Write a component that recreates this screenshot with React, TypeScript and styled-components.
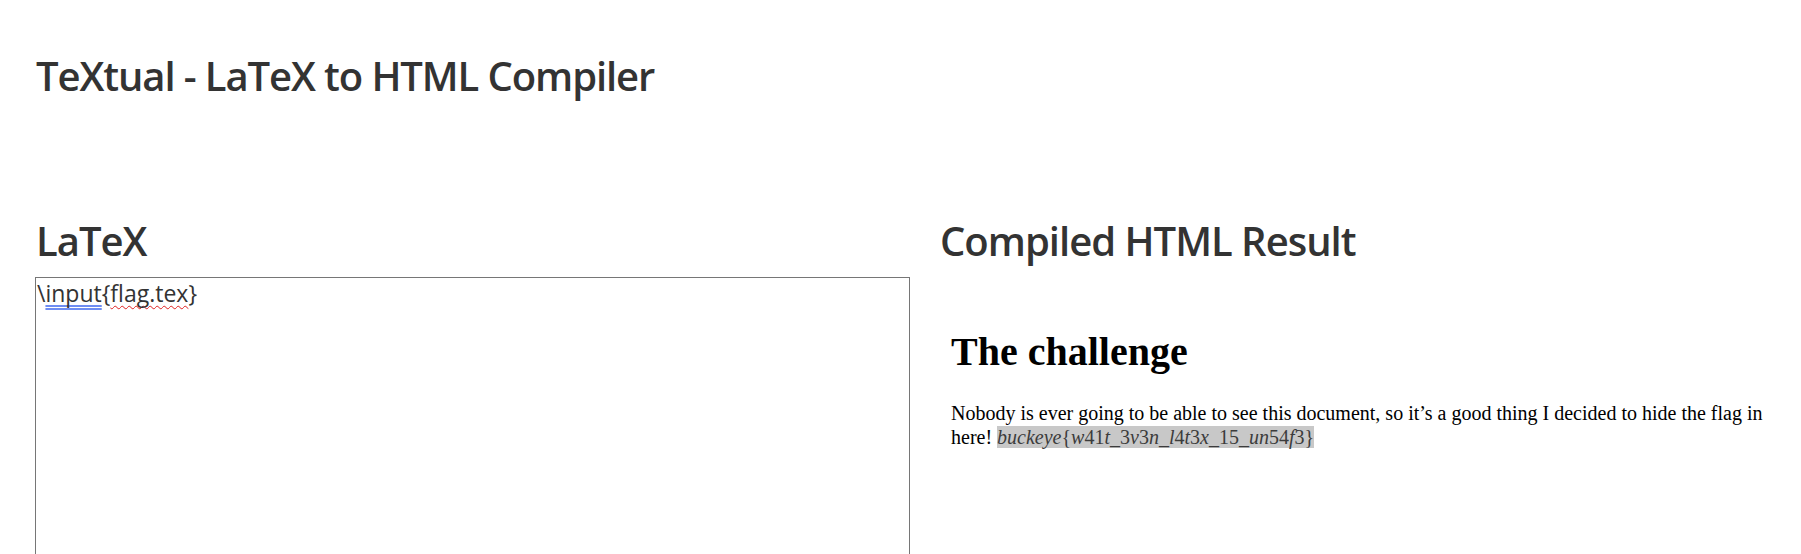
import styled, { createGlobalStyle } from 'styled-components';

const GlobalStyle = createGlobalStyle`
    html, body {
        margin: 0;
        padding: 0;
        background: #ffffff;
        height: 100%;
        overflow: hidden;
    }
    body {
        font-family: "Open Sans", "Noto Sans", sans-serif;
        color: #333333;
    }
`

const Page = styled('div')`
    padding: 52px 35px 0 35px;
    box-sizing: border-box;
`

const Title = styled('h1')`
    margin: 0;
    font-size: 40px;
    line-height: 48px;
    font-weight: 600;
    letter-spacing: -1.1px;
    padding-left: 1px;
`

const Columns = styled('div')`
    display: grid;
    grid-template-columns: 875px 1fr;
    column-gap: 30px;
    margin-top: 117px;
`

const Column = styled('section')`
    display: flex;
    flex-direction: column;
`

const SectionHeading = styled('h2')<{ $indent?: number }>`
    margin: 0 0 12px 0;
    padding-left: ${props => props.$indent ?? 1}px;
    font-size: 40px;
    line-height: 48px;
    font-weight: 600;
    letter-spacing: -1px;
`

const Editor = styled('div')`
    box-sizing: border-box;
    height: 320px;
    border: 1px solid #767676;
    padding: 0 1px;
    font-size: 23px;
    line-height: 31px;
    color: #333333;
    white-space: pre;
`

const GrammarMark = styled('span')`
    text-decoration: underline double #6f8df2;
    text-decoration-skip-ink: none;
    text-underline-offset: 3px;
`

const SpellMark = styled('span')`
    text-decoration: underline wavy #e02020;
    text-decoration-thickness: 1px;
    text-decoration-skip-ink: none;
    text-underline-offset: 3px;
`

const Result = styled('div')`
    padding: 51px 0 0 11px;
    font-family: "Liberation Serif", "Times New Roman", serif;
    color: #000000;
`

const DocHeading = styled('h1')`
    margin: 0 0 25px 0;
    font-size: 40px;
    line-height: 48px;
    font-weight: 700;
`

const DocText = styled('p')`
    margin: 0;
    font-size: 20px;
    line-height: 24px;
`

const Flag = styled('span')`
    background: #c8c8c8;
    color: #3c3c3c;
`

const App = () => {
    return (
        <>
            <GlobalStyle />
            <Page>
                <Title>TeXtual - LaTeX to HTML Compiler</Title>
                <Columns>
                    <Column>
                        <SectionHeading>LaTeX</SectionHeading>
                        <Editor>\<GrammarMark>input</GrammarMark>{'{'}<SpellMark>flag.tex</SpellMark>{'}'}</Editor>
                    </Column>
                    <Column>
                        <SectionHeading $indent={0}>Compiled HTML Result</SectionHeading>
                        <Result>
                            <DocHeading>The challenge</DocHeading>
                            <DocText>
                                Nobody is ever going to be able to see this document, so it’s a good thing I decided to hide the flag in here!{' '}
                                <Flag>
                                    <i>buckeye</i>{'{'}<i>w</i>41<i>t</i>_3<i>v</i>3<i>n</i>_<i>l</i>4<i>t</i>3<i>x</i>_15_<i>un</i>54<i>f</i>3{'}'}
                                </Flag>
                            </DocText>
                        </Result>
                    </Column>
                </Columns>
            </Page>
        </>
    );
};

export default App;
